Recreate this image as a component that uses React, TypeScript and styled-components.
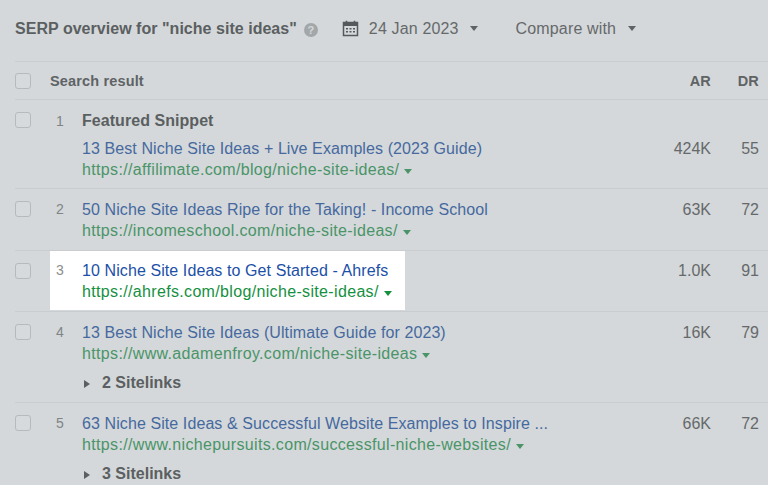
import React from "react";
import styled, { createGlobalStyle } from "styled-components";

const Global = createGlobalStyle`
  html, body { margin: 0; padding: 0; height: 485px; overflow: hidden; background: #d4d8da; }
  body { font-family: "Liberation Sans", Arial, sans-serif; }
  #root { height: 485px; overflow: hidden; }
`;

const Page = styled.div`
  padding-left: 15px;
  color: #5a5e60;
`;

const Header = styled.header`
  height: 57px;
  padding-bottom: 4px;
  display: flex;
  align-items: center;
  border-bottom: 1px solid #c9cdcf;
`;

const Title = styled.h1`
  margin: 0;
  font-size: 16px;
  font-weight: 700;
  line-height: 20px;
  color: #5b5f61;
  letter-spacing: 0.03px;
`;

const HelpDot = styled.span`
  width: 14px;
  height: 14px;
  margin-left: 7px;
  margin-top: 3px;
  border-radius: 50%;
  background: #a3a7a9;
  color: #d4d8da;
  font-size: 11px;
  font-weight: 700;
  line-height: 14px;
  text-align: center;
`;

const DateButton = styled.div`
  display: flex;
  align-items: center;
  margin-left: 24px;
  font-size: 16px;
  letter-spacing: 0.15px;
  color: #66696b;
`;

const CompareButton = styled(DateButton)`
  margin-left: 38px;
`;

const Caret = styled.span<{ $gap: number }>`
  width: 0;
  height: 0;
  margin-left: ${(p) => p.$gap}px;
  border-left: 4.5px solid transparent;
  border-right: 4.5px solid transparent;
  border-top: 5.5px solid #5f6365;
`;

const CalendarIcon = styled.svg`
  width: 17px;
  height: 17px;
  margin-right: 10px;
  color: #55595b;
`;

const GridRow = styled.div<{ $h: number }>`
  display: grid;
  grid-template-columns: 35px 1fr 54px 48px;
  padding-right: 9px;
  height: ${(p) => p.$h}px;
  border-bottom: 1px solid #c9cdcf;
`;

const Check = styled.span<{ $top: number }>`
  display: block;
  width: 14px;
  height: 14px;
  margin-top: ${(p) => p.$top}px;
  border: 1px solid #b6babc;
  border-radius: 3px;
  background: #d6dadc;
`;

const HeadLabel = styled.div`
  font-size: 14.5px;
  font-weight: 700;
  line-height: 18px;
  padding-top: 10px;
  letter-spacing: 0.15px;
  color: #5f6365;
`;

const HeadNum = styled(HeadLabel)`
  text-align: right;
`;

const Main = styled.div<{ $hl?: boolean }>`
  display: flex;
  align-self: start;
  width: ${(p) => (p.$hl ? "355px" : "auto")};
  height: ${(p) => (p.$hl ? "59px" : "auto")};
  background: ${(p) => (p.$hl ? "#ffffff" : "transparent")};
`;

const Index = styled.div<{ $hl?: boolean; $top: number }>`
  width: 32px;
  flex: none;
  box-sizing: border-box;
  padding-left: 6px;
  padding-top: ${(p) => p.$top}px;
  font-size: 14px;
  line-height: 21px;
  color: ${(p) => (p.$hl ? "#8d8d8d" : "#808486")};
`;

const Content = styled.div<{ $top: number }>`
  min-width: 0;
  padding-top: ${(p) => p.$top}px;
`;

const Snippet = styled.div`
  font-size: 16px;
  font-weight: 700;
  line-height: 20px;
  height: 27px;
  letter-spacing: 0.05px;
  color: #5b5f61;
`;

const Link = styled.a<{ $hl?: boolean }>`
  display: block;
  font-size: 16px;
  line-height: 21px;
  white-space: nowrap;
  letter-spacing: 0.09px;
  color: ${(p) => (p.$hl ? "#1c50a8" : "#46699f")};
`;

const Url = styled.div<{ $hl?: boolean }>`
  display: flex;
  align-items: center;
  font-size: 16px;
  line-height: 21px;
  white-space: nowrap;
  letter-spacing: 0.34px;
  color: ${(p) => (p.$hl ? "#15903f" : "#4a9468")};
`;

const UrlCaret = styled.span<{ $hl?: boolean }>`
  width: 0;
  height: 0;
  margin: 3px 0 0 5px;
  border-left: 4.5px solid transparent;
  border-right: 4.5px solid transparent;
  border-top: 5.5px solid ${(p) => (p.$hl ? "#15903f" : "#4a9468")};
`;

const Sitelinks = styled.div`
  display: flex;
  align-items: center;
  margin-top: 9px;
  font-size: 16px;
  font-weight: 700;
  line-height: 20px;
  color: #5b5f61;
`;

const SideCaret = styled.span`
  width: 0;
  height: 0;
  margin: 1px 12px 0 2px;
  border-top: 4.5px solid transparent;
  border-bottom: 4.5px solid transparent;
  border-left: 6px solid #5b5f61;
`;

const NumCell = styled.div<{ $top: number }>`
  padding-top: ${(p) => p.$top}px;
  font-size: 16px;
  line-height: 21px;
  text-align: right;
  color: #66696b;
`;

type Row = {
  n: number; h: number; top: number; numTop: number; title: string; url: string; ar: string; dr: string;
  snippet?: boolean; hl?: boolean; sitelinks?: number;
};

const rows: Row[] = [
  { n: 1, h: 88, top: 11, numTop: 38, snippet: true, title: "13 Best Niche Site Ideas + Live Examples (2023 Guide)", url: "https://affilimate.com/blog/niche-site-ideas/", ar: "424K", dr: "55" },
  { n: 2, h: 61, top: 10, numTop: 10, title: "50 Niche Site Ideas Ripe for the Taking! - Income School", url: "https://incomeschool.com/niche-site-ideas/", ar: "63K", dr: "72" },
  { n: 3, h: 60, top: 9, numTop: 9, hl: true, title: "10 Niche Site Ideas to Get Started - Ahrefs", url: "https://ahrefs.com/blog/niche-site-ideas/", ar: "1.0K", dr: "91" },
  { n: 4, h: 90, top: 10, numTop: 10, sitelinks: 2, title: "13 Best Niche Site Ideas (Ultimate Guide for 2023)", url: "https://www.adamenfroy.com/niche-site-ideas", ar: "16K", dr: "79" },
  { n: 5, h: 90, top: 10, numTop: 10, sitelinks: 3, title: "63 Niche Site Ideas & Successful Website Examples to Inspire ...", url: "https://www.nichepursuits.com/successful-niche-websites/", ar: "66K", dr: "72" },
];

export default function App() {
  return (
    <Page>
      <Global />
      <Header>
        <Title>SERP overview for "niche site ideas"</Title>
        <HelpDot>?</HelpDot>
        <DateButton>
          <CalendarIcon viewBox="0 0 17 17" fill="none">
            <path d="M1.5 2.5h14v13h-14z" stroke="currentColor" strokeWidth="1.5" />
            <path d="M1.5 2.5h14V6h-14z" fill="currentColor" />
            <path d="M4.5 0.8v3M12.5 0.8v3" stroke="currentColor" strokeWidth="1.6" />
            <path d="M4 8h2v1.6H4zM7.5 8h2v1.6h-2zM11 8h2v1.6h-2zM4 11h2v1.6H4zM7.5 11h2v1.6h-2zM11 11h2v1.6h-2z" fill="currentColor" />
          </CalendarIcon>
          24 Jan 2023
          <Caret $gap={11} />
        </DateButton>
        <CompareButton>
          Compare with
          <Caret $gap={12} />
        </CompareButton>
      </Header>
      <GridRow $h={37}>
        <Check $top={11} />
        <HeadLabel>Search result</HeadLabel>
        <HeadNum>AR</HeadNum>
        <HeadNum>DR</HeadNum>
      </GridRow>
      {rows.map((r) => (
        <GridRow key={r.n} $h={r.h}>
          <Check $top={12} />
          <Main $hl={r.hl}>
            <Index $hl={r.hl} $top={r.top}>{r.n}</Index>
            <Content $top={r.top}>
              {r.snippet && <Snippet>Featured Snippet</Snippet>}
              <Link $hl={r.hl}>{r.title}</Link>
              <Url $hl={r.hl}>
                {r.url}
                <UrlCaret $hl={r.hl} />
              </Url>
              {r.sitelinks && (
                <Sitelinks>
                  <SideCaret />
                  {r.sitelinks} Sitelinks
                </Sitelinks>
              )}
            </Content>
          </Main>
          <NumCell $top={r.numTop}>{r.ar}</NumCell>
          <NumCell $top={r.numTop}>{r.dr}</NumCell>
        </GridRow>
      ))}
    </Page>
  );
}
